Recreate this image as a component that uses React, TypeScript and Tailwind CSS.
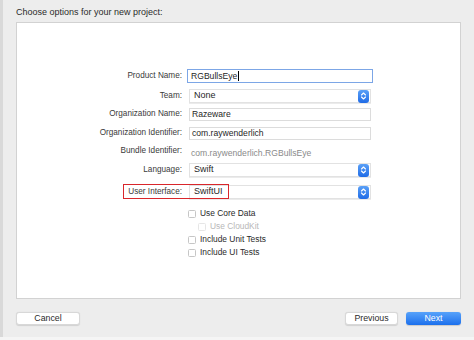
import React from 'react'

const font = { fontFamily: '"Liberation Sans", Arial, sans-serif' }

function Stepper() {
  return (
    <div className="flex h-[13px] w-[11px] items-center justify-center rounded-[3px] bg-gradient-to-b from-[#5aa0f7] to-[#1f6be6]">
      <svg width="7" height="10" viewBox="0 0 7 10" fill="none">
        <path d="M1.5 4 L3.5 2 L5.5 4" stroke="white" strokeWidth="1.1" strokeLinecap="round" strokeLinejoin="round" />
        <path d="M1.5 6 L3.5 8 L5.5 6" stroke="white" strokeWidth="1.1" strokeLinecap="round" strokeLinejoin="round" />
      </svg>
    </div>
  )
}

function Row({ label, children, className = '' }: { label: string; children: React.ReactNode; className?: string }) {
  return (
    <div className={`flex items-center ${className}`}>
      <div className="w-[172px] pr-[7px] text-right text-[8.2px] text-[#3a3a3a]">{label}</div>
      <div className="w-[182px]">{children}</div>
    </div>
  )
}

function TextField({ value, focused = false }: { value: string; focused?: boolean }) {
  return (
    <div
      className={
        focused
          ? '-mx-[2px] flex h-[14px] items-center border-[1.5px] border-[#7ca6e6] bg-white pl-[3px] text-[8.6px] text-[#1f1f1f]'
          : 'flex h-[13px] items-center border border-[#dcdcdc] bg-white pl-[2px] text-[8.6px] text-[#1f1f1f]'
      }
    >
      {value}
      {focused && <span className="ml-[1px] h-[10px] w-px bg-black" />}
    </div>
  )
}

function Popup({ value }: { value: string }) {
  return (
    <div className="flex h-[14px] items-center justify-between border border-[#e2e2e2] bg-white pl-[4px] pr-px text-[9px] text-[#1f1f1f] shadow-[0_0.5px_0.5px_rgba(0,0,0,0.08)]">
      <span>{value}</span>
      <Stepper />
    </div>
  )
}

function Check({ label, disabled = false, indent = false }: { label: string; disabled?: boolean; indent?: boolean }) {
  return (
    <div className={`flex h-[13px] items-center gap-[4px] ${indent ? 'pl-[10px]' : ''}`}>
      <div className={`h-[8px] w-[8px] rounded-[1.5px] border bg-white ${disabled ? 'border-[#e6e6e6]' : 'border-[#c6c6c6]'}`} />
      <span className={`text-[8.4px] ${disabled ? 'text-[#b8b8b8]' : 'text-[#2a2a2a]'}`}>{label}</span>
    </div>
  )
}

export default function App() {
  return (
    <div className="h-[340px] w-[474px] overflow-hidden bg-[#ededed]" style={font}>
      <div className="flex h-[337px] flex-col border-l-[3px] border-[#d9d9d9] pl-[13px] pr-[13px]">
        <div className="pt-[6px] text-[9px] leading-[12px] text-[#2b2b2b]">Choose options for your new project:</div>
        <div className="relative mt-[4px] h-[277px] w-[445px] border border-[#d2d2d2] bg-white">
          <div className="flex flex-col pt-[46px]">
            <Row label="Product Name:">
              <TextField value="RGBullsEye" focused />
            </Row>
            <Row label="Team:" className="mt-[6px]">
              <Popup value="None" />
            </Row>
            <Row label="Organization Name:" className="mt-[5px]">
              <TextField value="Razeware" />
            </Row>
            <Row label="Organization Identifier:" className="mt-[6px]">
              <TextField value="com.raywenderlich" />
            </Row>
            <Row label="Bundle Identifier:" className="mt-[4px] h-[14px]">
              <span className="pl-[2px] text-[8.6px] text-[#8a8a8a]">com.raywenderlich.RGBullsEye</span>
            </Row>
            <Row label="Language:" className="mt-[5px]">
              <Popup value="Swift" />
            </Row>
            <Row label="User Interface:" className="mt-[8px]">
              <Popup value="SwiftUI" />
            </Row>
            <div className="mt-[8px] flex flex-col pl-[171px]">
              <Check label="Use Core Data" />
              <Check label="Use CloudKit" disabled indent />
              <Check label="Include Unit Tests" />
              <Check label="Include UI Tests" />
            </div>
          </div>
          <div className="absolute left-[106px] top-[161px] h-[15px] w-[106px] border-[1.5px] border-[#d9262b]" />
        </div>
        <div className="mt-[13px] flex items-center justify-between">
          <button className="h-[13px] w-[64px] rounded-[3px] border border-[#d8d8d8] bg-white text-[8.8px] leading-[11px] text-[#2b2b2b] shadow-[0_0.5px_1px_rgba(0,0,0,0.12)]">
            Cancel
          </button>
          <div className="flex gap-[8px]">
            <button className="h-[13px] w-[53px] rounded-[3px] border border-[#d8d8d8] bg-white text-[8.8px] leading-[11px] text-[#2b2b2b] shadow-[0_0.5px_1px_rgba(0,0,0,0.12)]">
              Previous
            </button>
            <button className="h-[13px] w-[55px] rounded-[3px] bg-gradient-to-b from-[#57a2fa] to-[#1a6fec] text-[8.8px] leading-[13px] text-white shadow-[0_0.5px_1px_rgba(0,0,0,0.15)]">
              Next
            </button>
          </div>
        </div>
      </div>
      <div className="h-[3px] bg-[#f5f5f5]" />
    </div>
  )
}
